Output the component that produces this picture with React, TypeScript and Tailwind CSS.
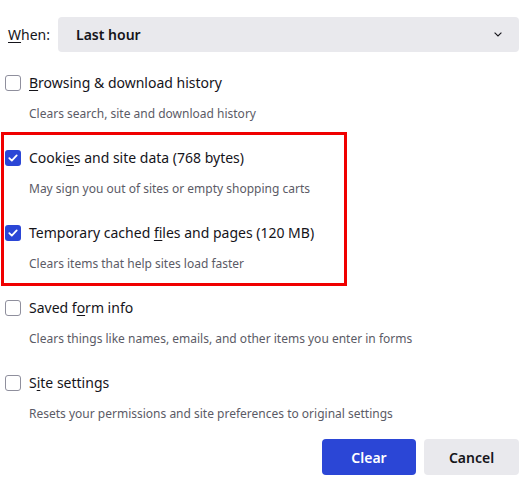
import React from "react";

type Item = {
  before: string;
  key: string;
  after: string;
  desc: string;
  checked: boolean;
};

const topItems: Item[] = [
  {
    before: "",
    key: "B",
    after: "rowsing & download history",
    desc: "Clears search, site and download history",
    checked: false,
  },
];

const markedItems: Item[] = [
  {
    before: "Cooki",
    key: "e",
    after: "s and site data (768 bytes)",
    desc: "May sign you out of sites or empty shopping carts",
    checked: true,
  },
  {
    before: "Temporary cached ",
    key: "f",
    after: "iles and pages (120 MB)",
    desc: "Clears items that help sites load faster",
    checked: true,
  },
];

const bottomItems: Item[] = [
  {
    before: "Saved f",
    key: "o",
    after: "rm info",
    desc: "Clears things like names, emails, and other items you enter in forms",
    checked: false,
  },
  {
    before: "S",
    key: "i",
    after: "te settings",
    desc: "Resets your permissions and site preferences to original settings",
    checked: false,
  },
];

function Checkbox({ checked }: { checked: boolean }) {
  if (checked) {
    return (
      <span className="flex h-4 w-4 shrink-0 items-center justify-center rounded-[3px] bg-[#2b46d6]">
        <svg width="12" height="12" viewBox="0 0 12 12" fill="none">
          <path
            d="M2.3 6.2 4.8 8.6 9.7 3.4"
            stroke="white"
            strokeWidth="1.8"
            strokeLinecap="round"
            strokeLinejoin="round"
          />
        </svg>
      </span>
    );
  }
  return (
    <span className="h-4 w-4 shrink-0 rounded-[3px] border border-[#8f8f9d] bg-white" />
  );
}

function Option({ item }: { item: Item }) {
  return (
    <div className="flex flex-col">
      <label className="flex h-5 items-center gap-2">
        <Checkbox checked={item.checked} />
        <span className="text-[14px] leading-5 text-[#15141a]">
          {item.before}
          <span className="underline underline-offset-2">{item.key}</span>
          {item.after}
        </span>
      </label>
      <p className="mt-3 pl-6 text-[12px] leading-[18px] text-[#5b5b66]">
        {item.desc}
      </p>
    </div>
  );
}

export default function App() {
  return (
    <div
      className="h-[487px] w-[529px] bg-white pl-[5px] pr-[10px] pt-[17px]"
      style={{ fontFamily: '"Noto Sans", "Open Sans", sans-serif' }}
    >
      <div className="flex items-center">
        <span className="w-[53px] pl-[3px] text-[14px] text-[#15141a]">
          <span className="underline underline-offset-2">W</span>hen:
        </span>
        <button className="flex h-[35px] flex-1 items-center justify-between rounded-[4px] bg-[#e9e9ed] pl-[18px] pr-[17px]">
          <span className="text-[14px] font-semibold text-[#15141a]">Last hour</span>
          <svg width="8" height="5" viewBox="0 0 8 5" fill="none">
            <path d="M0.6 0.6 4 4 7.4 0.6" stroke="#15141a" strokeWidth="1.1" />
          </svg>
        </button>
      </div>

      <div className="mt-[21px] flex flex-col gap-[25px]">
        {topItems.map((item) => (
          <Option key={item.desc} item={item} />
        ))}

        <div className="relative flex flex-col gap-[25px]">
          <div className="pointer-events-none absolute -bottom-[13px] -left-[4px] -top-[16px] w-[346px] border-[3px] border-[#f00000]" />
          {markedItems.map((item) => (
            <Option key={item.desc} item={item} />
          ))}
        </div>

        {bottomItems.map((item) => (
          <Option key={item.desc} item={item} />
        ))}
      </div>

      <div className="mt-4 flex justify-end gap-2">
        <button className="h-9 w-[94px] rounded-[4px] bg-[#2b46d6] text-[14px] font-semibold text-white">
          Clear
        </button>
        <button className="h-9 w-[95px] rounded-[4px] bg-[#e9e9ed] text-[14px] font-semibold text-[#15141a]">
          Cancel
        </button>
      </div>
    </div>
  );
}
